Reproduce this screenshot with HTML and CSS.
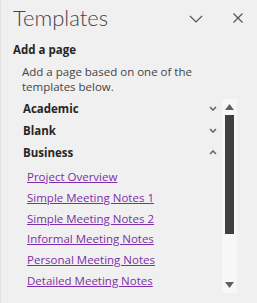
FILE: index.html
```html
<!DOCTYPE html>
<html lang="en">
<head>
    <meta charset="UTF-8">
    <meta name="viewport" content="width=device-width, initial-scale=1.0">
    <title>Templates</title>
    <link rel="stylesheet" href="styles.css">
</head>
<body>
    <div class="pane">
        <div class="pane-header">
            <h1>Templates</h1>
            <button class="icon-btn collapse" title="Task pane options">
                <svg width="14" height="8" viewBox="0 0 14 8"><path d="M1 1 L7 7 L13 1" fill="none" stroke="#555" stroke-width="1.2"/></svg>
            </button>
            <button class="icon-btn close" title="Close">
                <svg width="12" height="10" viewBox="0 0 12 10"><path d="M1.5 0.5 L10.5 9.5 M10.5 0.5 L1.5 9.5" fill="none" stroke="#555" stroke-width="1.2"/></svg>
            </button>
        </div>

        <h2>Add a page</h2>
        <p class="desc">Add a page based on one of the templates below.</p>

        <div class="templates">
            <div class="list">
                <div class="category">
                    <span>Academic</span>
                    <svg class="chev" width="8" height="5" viewBox="0 0 8 5"><path d="M1 1 L4 4 L7 1" fill="none" stroke="#666" stroke-width="1.6"/></svg>
                </div>
                <div class="category">
                    <span>Blank</span>
                    <svg class="chev" width="8" height="5" viewBox="0 0 8 5"><path d="M1 1 L4 4 L7 1" fill="none" stroke="#666" stroke-width="1.6"/></svg>
                </div>
                <div class="category">
                    <span>Business</span>
                    <svg class="chev" width="8" height="5" viewBox="0 0 8 5"><path d="M1 4 L4 1 L7 4" fill="none" stroke="#666" stroke-width="1.6"/></svg>
                </div>
                <ul class="links">
                    <li><a href="#">Project Overview</a></li>
                    <li><a href="#">Simple Meeting Notes 1</a></li>
                    <li><a href="#">Simple Meeting Notes 2</a></li>
                    <li><a href="#">Informal Meeting Notes</a></li>
                    <li><a href="#">Personal Meeting Notes</a></li>
                    <li><a href="#">Detailed Meeting Notes</a></li>
                </ul>
            </div>

            <div class="scrollbar">
                <svg class="arrow" width="9" height="6" viewBox="0 0 9 6"><path d="M0 6 L4.5 0 L9 6 Z" fill="#606060"/></svg>
                <div class="thumb"></div>
                <svg class="arrow down" width="9" height="6" viewBox="0 0 9 6"><path d="M0 0 L4.5 6 L9 0 Z" fill="#606060"/></svg>
            </div>
        </div>
    </div>
</body>
</html>
```

FILE: styles.css
```css
html, body {
    margin: 0;
    padding: 0;
    height: 100%;
}
body {
    font-family: "Open Sans", "Noto Sans", sans-serif;
    background-color: #f0f0f0;
    color: #262626;
}
.pane {
    height: 100%;
    box-sizing: border-box;
    border-left: 1px solid #e2e2e2;
    padding-left: 12px;
}

/* header: title + options + close */
.pane-header {
    display: flex;
    align-items: center;
    height: 36px;
}
.pane-header h1 {
    margin: 0;
    flex: 1;
    font-family: Lato, "Open Sans", sans-serif;
    font-size: 22px;
    font-weight: 300;
    line-height: 36px;
    color: #444;
}
.icon-btn {
    border: none;
    background: none;
    padding: 0;
    display: flex;
    align-items: center;
}
.icon-btn.collapse {
    margin-right: 29px;
    margin-top: 1px;
}
.icon-btn.close {
    margin-right: 13px;
}

h2 {
    margin: 6px 0 0 0;
    font-size: 11.5px;
    font-weight: 700;
    line-height: 16px;
}
.desc {
    margin: 6px 0 0 9px;
    width: 190px;
    font-size: 11.5px;
    line-height: 15px;
    color: #444;
}

/* template list with its own scrollbar */
.templates {
    display: flex;
    margin-top: 3px;
}
.list {
    width: 205px;
}
.category {
    display: flex;
    align-items: center;
    justify-content: space-between;
    height: 22px;
    padding-left: 10px;
    font-size: 11.5px;
    font-weight: 700;
}
.category .chev {
    margin-right: 1px;
}
.links {
    list-style: none;
    margin: 3px 0 0 0;
    padding: 0 0 0 14px;
}
.links li {
    height: 20.8px;
    line-height: 21px;
    font-size: 11.5px;
}
.links a {
    color: #7d2eaa;
    text-decoration: underline;
}

.scrollbar {
    margin: 2px 0 0 4px;
    width: 15px;
    height: 194px;
    background-color: #f7f7f7;
    display: flex;
    flex-direction: column;
    align-items: center;
}
.scrollbar .arrow {
    margin-top: 5px;
}
.scrollbar .arrow.down {
    margin-top: auto;
    margin-bottom: 5px;
}
.thumb {
    margin-top: 5px;
    width: 9px;
    height: 119px;
    background-color: #404040;
}
```
